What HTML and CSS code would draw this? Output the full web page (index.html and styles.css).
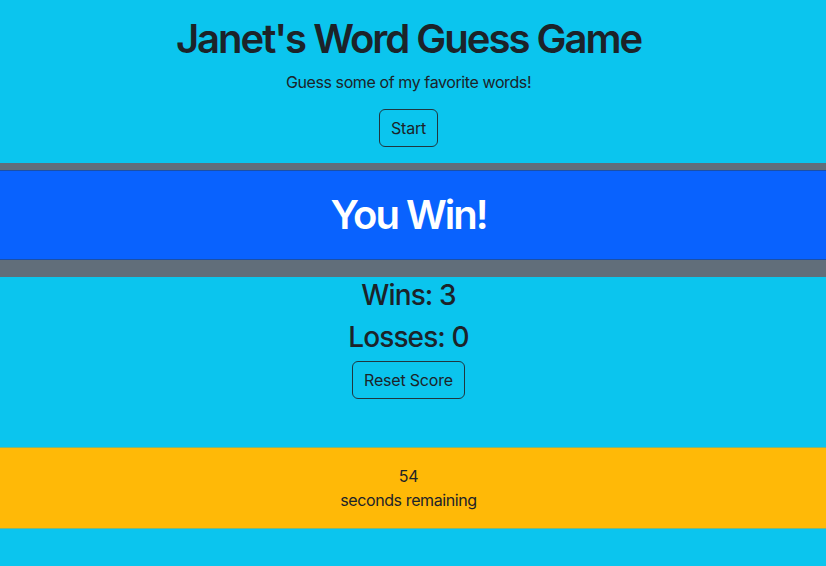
FILE: index.html
```html
<!DOCTYPE html>
<html lang="en">
<head>
<meta charset="utf-8">
<title>Janet's Word Guess Game</title>
<link rel="stylesheet" href="styles.css">
</head>
<body>
<header class="intro">
  <h1 class="title">Janet's Word Guess Game</h1>
  <p class="subtitle">Guess some of my favorite words!</p>
  <button class="btn" type="button">Start</button>
</header>
<section class="band">
  <div class="result">
    <h1 class="result-text">You Win!</h1>
  </div>
</section>
<section class="score">
  <h3 class="score-line">Wins: 3</h3>
  <h3 class="score-line">Losses: 0</h3>
  <button class="btn" type="button">Reset Score</button>
</section>
<section class="timer">
  <div class="timer-count">54</div>
  <div class="timer-label">seconds remaining</div>
</section>
</body>
</html>
```
FILE: styles.css
```css
html, body {
  margin: 0;
  padding: 0;
}
body {
  background: #0bc5ee;
  color: #1c2329;
  font-family: Inter, "Noto Sans", "Liberation Sans", sans-serif;
  font-size: 16px;
  line-height: 24px;
  text-align: center;
  min-height: 566px;
}
.intro {
  padding: 15px 9px 16px 0;
}
.title {
  margin: 0 0 7px;
  font-size: 40px;
  line-height: 48px;
  font-weight: 600;
  letter-spacing: -2px;
}
.subtitle {
  margin: 0 0 15px;
  letter-spacing: -0.4px;
}
.btn {
  font-family: inherit;
  font-size: 16px;
  line-height: 24px;
  color: #1c2329;
  background: transparent;
  border: 1px solid #1f3640;
  border-radius: 6px;
  padding: 6px 11px;
  margin: 0;
  letter-spacing: -0.2px;
  cursor: pointer;
}
.band {
  background: #616e7a;
  padding: 7px 0 17px;
}
.result {
  background: #0962fe;
  border-top: 1px solid #1a4fa8;
  border-bottom: 1px solid #1a4fa8;
  height: 88px;
  padding-right: 9px;
  display: flex;
  align-items: center;
  justify-content: center;
}
.result-text {
  margin: 0;
  color: #ffffff;
  font-size: 40px;
  line-height: 48px;
  font-weight: 600;
  letter-spacing: -2px;
}
.score {
  padding: 1px 9px 48px 0;
}
.score-line {
  margin: 0 0 8px;
  font-size: 28px;
  line-height: 34px;
  font-weight: 500;
  letter-spacing: -0.9px;
}
.score-line + .score-line {
  margin-bottom: 7px;
}
.timer {
  background: #ffb907;
  border-top: 1px solid #7fb67a;
  border-bottom: 1px solid #7fb67a;
  padding: 16px 9px 16px 0;
  letter-spacing: -0.4px;
}
```
